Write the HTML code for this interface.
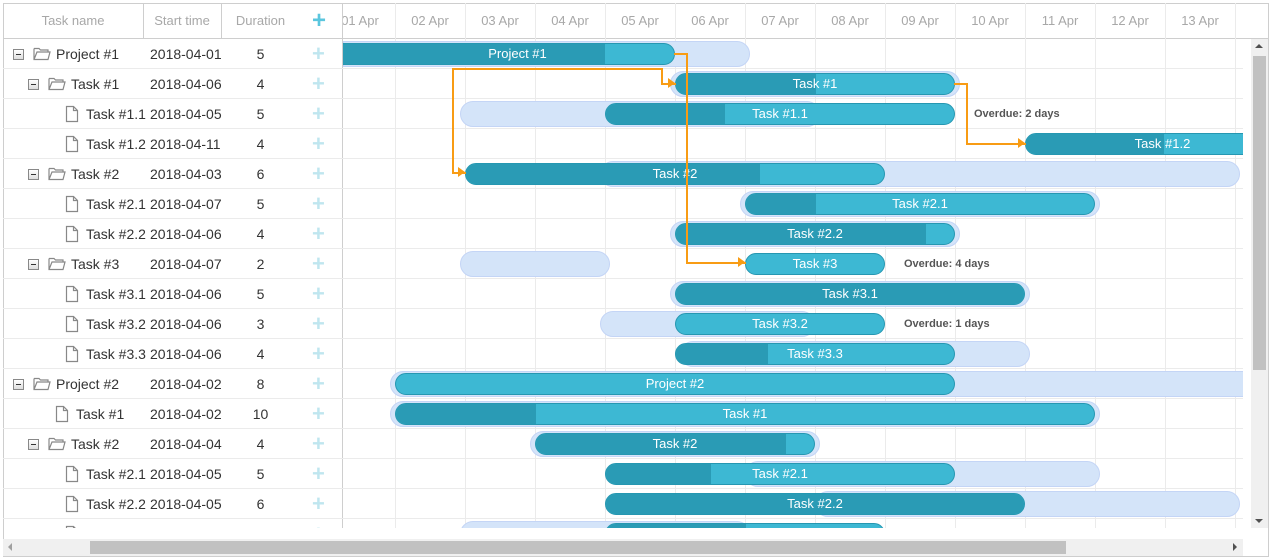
<!DOCTYPE html>
<html><head><meta charset="utf-8"><style>
*{box-sizing:border-box;margin:0;padding:0}
body{width:1273px;height:559px;background:#fff;font-family:"Liberation Sans",Arial,sans-serif;position:relative;overflow:hidden}
.a{position:absolute}
#wrap{position:absolute;left:3px;top:3px;width:1266px;height:554px;border:1px solid #cecece}
.hd{color:#a8a8a8;font-size:13px;top:4px;height:35px;line-height:34px;text-align:center}
.cell{font-size:14px;color:#333;height:30px;line-height:30px}
.plus{color:#bfe6ef;font-size:22px;font-weight:bold;line-height:30px}
.bg{background:#d4e4f9;border:1px solid #c4d5f6;border-radius:13px;height:26px}
.bar{background:#3db8d3;border:1px solid #2697b1;border-radius:11px;height:22px;overflow:hidden;color:#fff;font-size:13px;text-align:center;line-height:20px}
.pr{position:absolute;left:0;top:0;bottom:0;background:#2a9bb5}
.bar span{position:relative}
.od{font-size:11px;font-weight:bold;color:#555;line-height:30px}
.tg{width:11px;height:11px;border:1px solid #888;background:linear-gradient(#fff,#ddd);}
.tg:after{content:"";position:absolute;left:2px;top:4px;width:5px;height:1px;background:#333}
.ar{background:#f89c14}
</style></head><body>
<div id="wrap"></div>
<div id="c"></div>
<script>
var h='';
function A(s,st,c,t){h+='<div class="a '+(c||'')+'" style="'+st+'">'+(t||'')+'</div>';}
A('', 'left:3px;top:38px;width:1265px;height:1px;background:#cecece');
A('', 'left:342px;top:3px;width:1px;height:525px;background:#cecece');
A('', 'left:143px;top:3px;width:1px;height:35px;background:#cecece');
A('', 'left:221px;top:3px;width:1px;height:35px;background:#cecece');
A('', 'left:3px;width:140px;', 'hd','Task name');
A('', 'left:143px;width:78px;', 'hd','Start time');
A('', 'left:221px;width:79px;', 'hd','Duration');
A('', 'left:312px;top:4px;line-height:34px;color:#5bc6de;font-size:24px;font-weight:bold','','+');
var days=['01','02','03','04','05','06','07','08','09','10','11','12','13'];
h+='<div class="a" style="left:343px;top:3px;width:900px;height:525px;overflow:hidden">';
for(var k=0;k<13;k++){var x=325+70*k-343;
 A('', 'left:'+x+'px;top:1px;width:70px;height:34px;line-height:34px;text-align:center;color:#a8a8a8;font-size:13px','',days[k]+' Apr');
 A('', 'left:'+(x+70)+'px;top:0;width:1px;height:525px;background:#ebebeb');}
h+='</div>';
var rows=[[0,'f','Project #1','2018-04-01',5],[1,'f','Task #1','2018-04-06',4],[2,'l','Task #1.1','2018-04-05',5],[2,'l','Task #1.2','2018-04-11',4],
[1,'f','Task #2','2018-04-03',6],[2,'l','Task #2.1','2018-04-07',5],[2,'l','Task #2.2','2018-04-06',4],[1,'f','Task #3','2018-04-07',2],
[2,'l','Task #3.1','2018-04-06',5],[2,'l','Task #3.2','2018-04-06',3],[2,'l','Task #3.3','2018-04-06',4],[0,'f','Project #2','2018-04-02',8],
[1,'l','Task #1','2018-04-02',10],[1,'f','Task #2','2018-04-04',4],[2,'l','Task #2.1','2018-04-05',5],[2,'l','Task #2.2','2018-04-05',6],[2,'l','Task #2.3','2018-04-05',4]];
h+='<div class="a" style="left:3px;top:39px;width:1240px;height:489px;overflow:hidden">';
var bars=[[325,750,325,675,605],[670,960,675,955,815],[460,820,605,955,724],[0,0,1025,1300,1163],[600,1240,465,885,759],[740,1100,745,1095,815],
[670,960,675,955,925],[460,610,745,885,745],[670,1030,675,1025,1025],[600,815,675,885,675],[680,1030,675,955,767],[390,1300,395,955,395],
[390,1100,395,1095,535],[530,820,535,815,785],[745,1100,605,955,710],[815,1240,605,1025,1025],[460,750,605,885,745]];
rows.forEach(function(r,i){var y=30*i;
 A('', 'left:0;top:'+(y+29)+'px;width:1240px;height:1px;background:#ebebeb');
 var base=r[0]==0?10:(r[0]==1?25:40);
 if(r[1]=='f'){A('', 'left:'+base+'px;top:'+(y+10)+'px','tg');}
 var ix=r[1]=='f'?base+20:base+22;
 if(i==12) ix=52;
 if(r[1]=='f') h+='<svg class="a" style="left:'+ix+'px;top:'+(y+7)+'px" width="18" height="15" viewBox="0 0 18 15"><path d="M1 2.5h5l1.5 1.5h7.5v2M1 2.5v11h14l2-7.5h-13l-3 7.5" fill="none" stroke="#888" stroke-width="1.2"/></svg>';
 else h+='<svg class="a" style="left:'+ix+'px;top:'+(y+6)+'px" width="14" height="18" viewBox="0 0 14 18"><path d="M1.5 1.5h7l4 4v11h-11zM8.5 1.5v4h4" fill="none" stroke="#888" stroke-width="1.2"/></svg>';
 A('', 'left:'+(r[1]=='f'?ix+23:ix+21)+'px;top:'+y+'px','cell',r[2]);
 A('', 'left:147px;top:'+y+'px','cell',r[3]);
 A('', 'left:218px;top:'+y+'px;width:79px;text-align:center','cell',r[4]);
 A('', 'left:309px;top:'+y+'px','plus','+');
 var b=bars[i],o=3;
 if(b[1]>b[0]) A('', 'left:'+Math.max(b[0]-o,340)+'px;top:'+(y+2)+'px;width:'+(b[1]-Math.max(b[0],343))+'px;'+(b[0]<343?'border-top-left-radius:0;border-bottom-left-radius:0;':''),'bg');
 var L=Math.max(b[2],343);
 h+='<div class="a bar" style="left:'+(L-o)+'px;top:'+(y+4)+'px;width:'+(b[3]-L)+'px;'+(b[2]<343?'border-top-left-radius:0;border-bottom-left-radius:0;border-left:0;':'')+'"><div class="pr" style="width:'+(b[4]-L)+'px"></div><span style="left:'+((b[2]<343)?(343-b[2])/2:0)+'px">'+r[2]+'</span></div>';
});
A('', 'left:971px;top:60px','od','Overdue: 2 days');
A('', 'left:901px;top:210px','od','Overdue: 4 days');
A('', 'left:901px;top:270px','od','Overdue: 1 days');
function L(x1,y1,x2,y2){A('', 'left:'+(Math.min(x1,x2)-4)+'px;top:'+(Math.min(y1,y2)-40)+'px;width:'+(Math.abs(x2-x1)+2)+'px;height:'+(Math.abs(y2-y1)+2)+'px','ar');}
function T(x,y){A('', 'left:'+(x-10)+'px;top:'+(y-45)+'px;width:0;height:0;border-top:5px solid transparent;border-bottom:5px solid transparent;border-left:7px solid #f89c14');}
L(675,54,687,54);L(687,54,687,263);L(687,263,745,263);T(745,263);
L(453,69,662,69);L(662,69,662,84);L(662,84,675,84);T(675,84);
L(453,69,453,173);L(453,173,465,173);T(465,173);
L(955,84,967,84);L(967,84,967,144);L(967,144,1025,144);T(1025,144);
h+='</div>';
A('', 'left:1251px;top:39px;width:17px;height:489px;background:#f0f0f0');
A('', 'left:1253px;top:56px;width:13px;height:314px;background:#c1c1c1');
A('', 'left:1255px;top:44px;width:0;height:0;border-left:4px solid transparent;border-right:4px solid transparent;border-bottom:4px solid #505050');
A('', 'left:1255px;top:519px;width:0;height:0;border-left:4px solid transparent;border-right:4px solid transparent;border-top:4px solid #505050');
A('', 'left:3px;top:539px;width:1240px;height:17px;background:#f0f0f0');
A('', 'left:90px;top:541px;width:976px;height:13px;background:#c1c1c1');
A('', 'left:1233px;top:543px;width:0;height:0;border-top:4px solid transparent;border-bottom:4px solid transparent;border-left:4px solid #505050');
A('', 'left:8px;top:543px;width:0;height:0;border-top:4px solid transparent;border-bottom:4px solid transparent;border-right:4px solid #a0a0a0');
document.getElementById('c').innerHTML=h;
</script>
</body></html>
